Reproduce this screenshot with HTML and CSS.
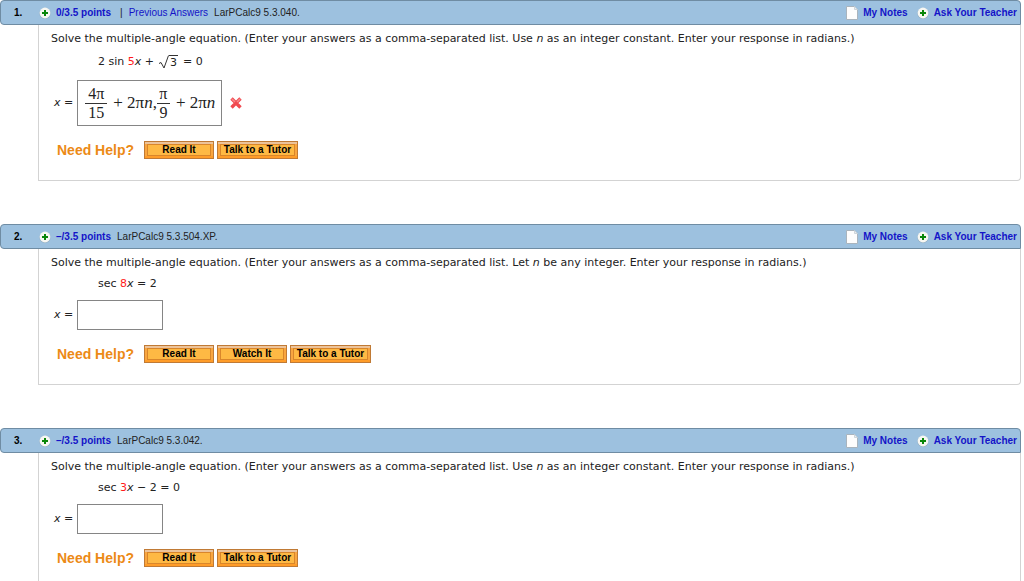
FILE: index.html
```html
<!DOCTYPE html>
<html lang="en">
<head>
    <meta charset="UTF-8">
    <meta name="viewport" content="width=device-width, initial-scale=1.0">
    <title>LarPCalc9 5.3</title>
    <link rel="stylesheet" href="styles.css">
</head>
<body>
    <svg class="defs" aria-hidden="true">
        <symbol id="plus" viewBox="0 0 12 12">
            <circle cx="6" cy="6.4" r="5.5" fill="#8fa9bb"/>
            <circle cx="6" cy="6" r="5.4" fill="#f7f7f2"/>
            <path d="M3 6h6M6 3v6" stroke="#0a860a" stroke-width="2"/>
        </symbol>
        <symbol id="note" viewBox="0 0 12 14">
            <path d="M.5 .5h8l3 3v10h-11z" fill="#fdfdfd" stroke="#a9b4bd"/>
            <path d="M8.500 .5v3h3" fill="#e8ecef" stroke="#cdd5db"/>
        </symbol>
    </svg>

    <div class="question">
        <div class="header">
            <span class="number">1.</span>
            <svg class="plus"><use href="#plus"/></svg>
            <a class="points" href="#">0/3.5 points</a>
            <span class="bar">|</span>
            <a class="previous" href="#">Previous Answers</a>
            <span class="name">LarPCalc9 5.3.040.</span>
            <div class="tools">
                <svg class="note"><use href="#note"/></svg>
                <a href="#">My Notes</a>
                <svg class="plus"><use href="#plus"/></svg>
                <a href="#">Ask Your Teacher</a>
            </div>
        </div>
        <div class="content">
            <p class="text">Solve the multiple-angle equation. (Enter your answers as a comma-separated list. Use <i>n</i> as an integer constant. Enter your response in radians.)</p>
            <div class="equation tall">
                <span>2 sin <b>5</b><i>x</i> +</span>
                <span class="root"><svg viewBox="0 0 10 14"><path d="M0 8.500l2-1 3 5.500L9.500 .5" fill="none" stroke="#333"/></svg><span class="radicand">3</span></span>
                <span>= 0</span>
            </div>
            <div class="answer">
                <span id="x1"><i>x</i> =</span>
                <div class="mathbox" role="textbox" aria-labelledby="x1" tabindex="0">
                    <span class="frac"><span>4π</span><span class="den">15</span></span>
                    <span class="term">+ 2π<i>n</i>,</span>
                    <span class="frac small"><span>π</span><span class="den">9</span></span>
                    <span class="term">+ 2π<i>n</i></span>
                </div>
                <svg class="wrong" viewBox="0 0 12 12" role="img" aria-label="Incorrect"><path d="M1.500 1.500l9 9M10.500 1.500l-9 9" stroke="#f04a50" stroke-width="3.400"/><path d="M2 2l3 3M10 2l-3 3" stroke="#f88a8c" stroke-width="1.500"/></svg>
            </div>
            <div class="help">
                <span class="need">Need Help?</span>
                <button type="button">Read It</button>
                <button type="button" class="tutor">Talk to a Tutor</button>
            </div>
        </div>
    </div>

    <div class="question">
        <div class="header">
            <span class="number">2.</span>
            <svg class="plus"><use href="#plus"/></svg>
            <a class="points" href="#">–/3.5 points</a>
            <span class="name">LarPCalc9 5.3.504.XP.</span>
            <div class="tools">
                <svg class="note"><use href="#note"/></svg>
                <a href="#">My Notes</a>
                <svg class="plus"><use href="#plus"/></svg>
                <a href="#">Ask Your Teacher</a>
            </div>
        </div>
        <div class="content">
            <p class="text">Solve the multiple-angle equation. (Enter your answers as a comma-separated list. Let <i>n</i> be any integer. Enter your response in radians.)</p>
            <div class="equation"><span>sec <b>8</b><i>x</i> = 2</span></div>
            <div class="answer">
                <label for="x2"><i>x</i> =</label>
                <input type="text" id="x2">
            </div>
            <div class="help">
                <span class="need">Need Help?</span>
                <button type="button">Read It</button>
                <button type="button">Watch It</button>
                <button type="button" class="tutor">Talk to a Tutor</button>
            </div>
        </div>
    </div>

    <div class="question">
        <div class="header">
            <span class="number">3.</span>
            <svg class="plus"><use href="#plus"/></svg>
            <a class="points" href="#">–/3.5 points</a>
            <span class="name">LarPCalc9 5.3.042.</span>
            <div class="tools">
                <svg class="note"><use href="#note"/></svg>
                <a href="#">My Notes</a>
                <svg class="plus"><use href="#plus"/></svg>
                <a href="#">Ask Your Teacher</a>
            </div>
        </div>
        <div class="content">
            <p class="text">Solve the multiple-angle equation. (Enter your answers as a comma-separated list. Use <i>n</i> as an integer constant. Enter your response in radians.)</p>
            <div class="equation"><span>sec <b>3</b><i>x</i> − 2 = 0</span></div>
            <div class="answer">
                <label for="x3"><i>x</i> =</label>
                <input type="text" id="x3">
            </div>
            <div class="help">
                <span class="need">Need Help?</span>
                <button type="button">Read It</button>
                <button type="button" class="tutor">Talk to a Tutor</button>
            </div>
        </div>
    </div>
</body>
</html>
```
FILE: styles.css
```css
*{
    box-sizing: border-box;
}

body{
    margin: 0 3px 0 0;
    background-color: #fff;
    color: #222;
    font-family: Verdana, "DejaVu Sans", sans-serif;
    font-size: 11px;
    line-height: 16px;
}

a{
    color: #1414c8;
    text-decoration: none;
}

.defs{
    display: none;
}

.question{
    margin-bottom: 43px;
}

/* blue title bar */
.header{
    display: flex;
    align-items: center;
    height: 25px;
    padding: 0 3px 0 13px;
    border: 1px solid #6f8ca3;
    border-radius: 4px 4px 0 4px;
    background-color: #9dc1df;
    font-family: Arial, "Liberation Sans", sans-serif;
    font-size: 10px;
}

.number{
    width: 25px;
    color: #000;
    font-weight: bold;
}

.plus{
    width: 12px;
    height: 12px;
}

.points{
    margin-left: 5px;
    font-weight: bold;
}

.bar{
    margin: 0 6px 0 9px;
}

.name{
    margin-left: 6px;
}

.tools{
    display: flex;
    align-items: center;
    gap: 5px;
    margin-left: auto;
    font-weight: bold;
}

.note{
    width: 12px;
    height: 14px;
}

.tools .plus{
    margin-left: 4px;
}

/* question body */
.content{
    margin-left: 38px;
    padding: 6px 12px 21px;
    border: 1px solid #d3d3d3;
    border-top: 0;
    border-bottom-right-radius: 4px;
}

.text{
    margin: 0;
}

.equation{
    display: flex;
    align-items: center;
    gap: 5px;
    margin: 5px 0 8px 47px;
}

.equation.tall{
    height: 20px;
}

.equation b{
    color: #ff1a1a;
    font-weight: normal;
}

.root{
    display: flex;
}

.root svg{
    width: 10px;
    height: 14px;
}

.radicand{
    padding: 0 1px;
    border-top: 1px solid #333;
    line-height: 14px;
}

.answer{
    display: flex;
    align-items: center;
    gap: 4px;
    margin-left: 3px;
}

.answer input{
    width: 86px;
    height: 30px;
    padding: 2px 6px;
    border: 1px solid #858585;
    background-color: #fff;
    font-size: 16px;
}

.mathbox{
    display: flex;
    align-items: center;
    height: 46px;
    padding: 0 6px 0 7px;
    border: 1px solid #858585;
    font-family: "Times New Roman", "Liberation Serif", serif;
    font-size: 17px;
    line-height: 18px;
}

.frac{
    display: flex;
    flex-direction: column;
    width: 22px;
    font-size: 16px;
    text-align: center;
}

.frac.small{
    width: 13px;
}

.den{
    border-top: 1px solid #333;
}

.term{
    margin-left: 6px;
}

.wrong{
    width: 12px;
    height: 12px;
    margin-left: 4px;
}

.help{
    display: flex;
    align-items: center;
    gap: 3px;
    margin: 15px 0 0 6px;
}

.need{
    margin-right: 7px;
    color: #ec8a16;
    font-family: Arial, "Liberation Sans", sans-serif;
    font-size: 14px;
    font-weight: bold;
}

.help button{
    width: 70px;
    height: 18px;
    padding: 0;
    border: 1px solid #c07a35;
    background-color: #feb944;
    box-shadow: inset 0 2px #ecc39a, inset 0 -2px #ff9c28, inset 2px 0 #f9a640, inset -2px 0 #f9a640, inset 0 0 0 3px #d9862b;
    color: #000;
    font-family: Arial, "Liberation Sans", sans-serif;
    font-size: 10px;
    font-weight: bold;
    line-height: 16px;
}

.help .tutor{
    width: 81px;
}
```
